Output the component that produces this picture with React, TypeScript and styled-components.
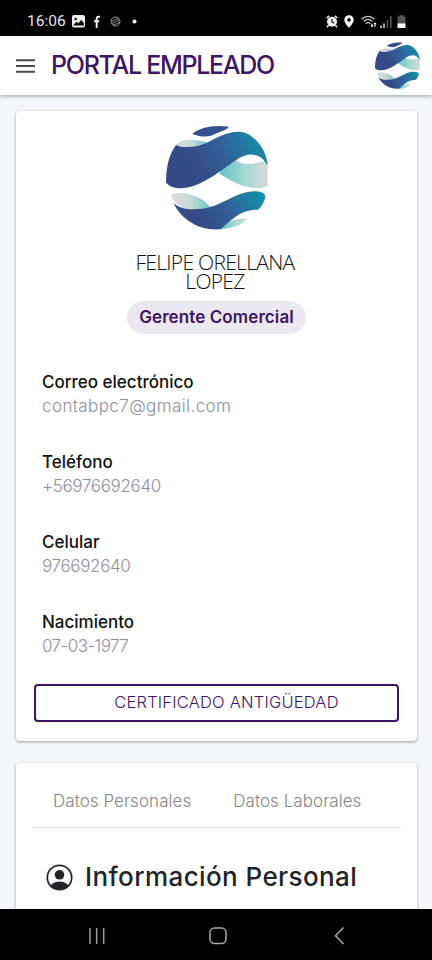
import React from "react";
import styled, { createGlobalStyle } from "styled-components";

const PURPLE = "#3d1466";

const GlobalStyle = createGlobalStyle`
  * { box-sizing: border-box; }
  html, body { margin: 0; padding: 0; background: #000; overflow: hidden; }
  body { font-family: Inter, "Open Sans", sans-serif; }
`;

const Screen = styled.div`
  width: 432px;
  height: 960px;
  display: flex;
  flex-direction: column;
  background: #f3f6fa;
  overflow: hidden;
`;

const StatusBar = styled.div`
  flex: 0 0 36px;
  display: flex;
  align-items: flex-start;
  justify-content: space-between;
  padding: 11px 26px 0 27px;
  background: #000;
  color: #e6e6e6;
`;

const Clock = styled.span`
  width: 45px;
  font: 400 15.5px/21px Roboto, sans-serif;
  white-space: nowrap;
`;

const StatusGroup = styled.div`
  display: flex;
  height: 21px;
  align-items: center;
`;

const Header = styled.header`
  flex: 0 0 59px;
  display: flex;
  align-items: center;
  padding: 0 12px 0 16px;
  background: #fff;
  box-shadow: 0 1px 4px rgba(0, 0, 0, 0.35);
  z-index: 1;
`;

const MenuButton = styled.button`
  display: flex;
  padding: 0;
  border: 0;
  background: none;
`;

const Brand = styled.h1`
  flex: 1;
  margin: 0 0 2px 16px;
  font-size: 25px;
  font-weight: 500;
  line-height: 30px;
  letter-spacing: -1.28px;
  color: ${PURPLE};
  white-space: nowrap;
`;

const Content = styled.main`
  flex: 1;
  min-height: 0;
  overflow: hidden;
  display: flex;
  flex-direction: column;
  gap: 22px;
  padding: 16px 15px 0 16px;
`;

const Card = styled.section<{ $height: number }>`
  flex: 0 0 ${(p) => p.$height}px;
  display: flex;
  flex-direction: column;
  background: #fff;
  border-radius: 4px;
  box-shadow: 0 1px 3px rgba(0, 0, 0, 0.38);
`;

const Profile = styled.div`
  display: flex;
  flex-direction: column;
  align-items: center;
  padding-top: 14px;
`;

const Name = styled.h2`
  width: 180px;
  margin: 23px 0 0 -3px;
  font: 300 21px/19px "Open Sans", sans-serif;
  letter-spacing: -0.7px;
  text-align: center;
  color: #111;
`;

const Badge = styled.span`
  height: 33px;
  margin-top: 10px;
  padding: 0 12px;
  border-radius: 17px;
  background: #ece8f1;
  color: ${PURPLE};
  font-size: 17px;
  font-weight: 600;
  line-height: 32px;
  letter-spacing: 0.1px;
`;

const Fields = styled.dl`
  display: flex;
  flex-direction: column;
  gap: 32px;
  margin: 36px 0 0 26px;
`;

const Label = styled.dt`
  font-size: 17px;
  font-weight: 500;
  line-height: 24px;
  color: #111;
`;

const Value = styled.dd<{ $spacing: number }>`
  margin: 0;
  font-size: 17px;
  font-weight: 300;
  line-height: 24px;
  letter-spacing: ${(p) => p.$spacing}px;
  color: #8f8f9d;
`;

const OutlineButton = styled.button`
  height: 38px;
  margin: 26px 18px 0;
  padding: 0 0 1px 20px;
  border: 2px solid ${PURPLE};
  border-radius: 4px;
  background: #fff;
  color: ${PURPLE};
  font: 300 16.5px/33px Inter, sans-serif;
  letter-spacing: 0.2px;
`;

const Tabs = styled.nav`
  display: flex;
  gap: 42px;
  height: 65px;
  margin: 0 16px;
  padding: 26px 0 0 21px;
  border-bottom: 1px solid #e4e5e7;
`;

const Tab = styled.span`
  font-size: 17px;
  font-weight: 300;
  line-height: 24px;
  letter-spacing: 0.05px;
  color: #858585;
  white-space: nowrap;
`;

const SectionTitle = styled.h3`
  display: flex;
  align-items: center;
  gap: 12px;
  margin: 34px 0 0 30px;
  font-size: 26px;
  font-weight: 500;
  line-height: 30px;
  letter-spacing: 0.4px;
  color: #212529;
  white-space: nowrap;
`;

const NavBar = styled.div`
  flex: 0 0 51px;
  display: flex;
  justify-content: space-between;
  padding: 17px 84px 0 87px;
  background: #000;
`;

const Icon = styled.svg<{ $gap?: number }>`
  display: block;
  flex: none;
  margin-left: ${(p) => p.$gap ?? 0}px;
`;

function Globe({ id, width, height }: { id: string; width: number; height: number }) {
  const url = (name: string) => `url(#${id}-${name})`;
  return (
    <Icon width={width} height={height} viewBox="48 45 307 316" preserveAspectRatio="none">
      <defs>
        <linearGradient id={`${id}-deep`} x1="0.25" x2="1" y1="0.5" y2="0.3">
          <stop offset="0" stopColor="#354b87" />
          <stop offset="0.45" stopColor="#30619a" />
          <stop offset="1" stopColor="#128fa9" />
        </linearGradient>
        <linearGradient id={`${id}-aqua`}>
          <stop offset="0" stopColor="#5cc6c5" />
          <stop offset="0.55" stopColor="#a8d8d5" />
          <stop offset="1" stopColor="#d5dad8" />
        </linearGradient>
        <linearGradient id={`${id}-pale`}>
          <stop offset="0" stopColor="#d9dcdc" />
          <stop offset="0.5" stopColor="#c5d9d8" />
          <stop offset="1" stopColor="#69c9c5" />
        </linearGradient>
      </defs>
      <path fill="#35508c" d="M127 72C150 52 190 44 237 50C231 61 211 64 194 73C177 83 151 81 127 72Z" />
      <path fill={url("pale")} d="M78 104C92 86 135 85 172 98C143 114 102 114 78 104Z" />
      <path fill={url("aqua")} d="M207 190L230 150L258 150C278 167 306 164 354 151V230C310 243 269 230 207 190Z" />
      <path fill={url("deep")} d="M78 105C112 119 157 109 190 89C236 63 277 57 303 77C331 98 353 133 354 168C334 127 295 125 258 151C203 189 143 240 83 235C68 234 56 228 48 219C48 172 57 133 78 105Z" />
      <path fill={url("pale")} d="M62 257C81 241 151 251 181 292C135 306 86 304 62 257Z" />
      <path fill={url("deep")} d="M70 280C95 303 142 302 181 292C228 278 260 248 306 245C327 243 345 247 347 260C344 276 337 289 326 299C279 302 256 317 218 358C158 366 99 338 70 280Z" />
      <path fill={url("aqua")} d="M213 359C231 340 246 327 292 325C280 346 252 354 213 359Z" />
    </Icon>
  );
}

const fields = [
  { label: "Correo electrónico", value: "contabpc7@gmail.com", spacing: 0.4 },
  { label: "Teléfono", value: "+56976692640", spacing: -0.35 },
  { label: "Celular", value: "976692640", spacing: -0.35 },
  { label: "Nacimiento", value: "07-03-1977", spacing: -0.55 },
];

function Status() {
  return (
    <StatusBar>
      <StatusGroup>
        <Clock>16:06</Clock>
        <Icon width="13" height="13" viewBox="0 0 13 13">
          <rect width="13" height="12.5" rx="2" fill="#ededed" />
          <circle cx="3.7" cy="4" r="1.2" fill="#000" />
          <path d="M1.5 9.8 4.5 6.8 6.2 8.3 9.3 5l2.5 3v2.5h-10Z" fill="#000" />
        </Icon>
        <Icon $gap={8} width="8" height="14" viewBox="0 0 8 14">
          <path d="M7 1.7H5.7C4.4 1.7 3.7 2.4 3.7 3.8V13M1 6.2h5.3" fill="none" stroke="#ededed" strokeWidth="2" />
        </Icon>
        <Icon $gap={9} width="11" height="11" viewBox="0 0 11 11">
          <circle cx="5.5" cy="5.5" r="4.5" fill="none" stroke="#999" />
          <path d="M1.5 4.5C4 6 5.5 1.7 9 3M2 7c3 1 4-3.5 7.5-2M3 9c3 .7 3.5-3 6.5-2" fill="none" stroke="#aaa" strokeWidth=".9" />
        </Icon>
        <Icon $gap={11} width="5" height="5" viewBox="0 0 5 5">
          <circle cx="2.5" cy="2.5" r="2" fill="#fff" />
        </Icon>
      </StatusGroup>
      <StatusGroup>
        <Icon width="12" height="13" viewBox="0 0 12 13">
          <circle cx="6" cy="6.7" r="5" fill="#efefef" />
          <path d="M.6 3 3.2.9M11.4 3 8.8.9M2.5 10.5 1 12.2M9.5 10.5l1.5 1.7" stroke="#efefef" strokeWidth="1.6" />
          <path d="M6 3.8v3.1l2.2 1.2" fill="none" stroke="#000" strokeWidth="1.1" />
        </Icon>
        <Icon $gap={6} width="10" height="13" viewBox="0 0 10 13">
          <path fillRule="evenodd" fill="#fff" d="M5 .2a4.7 4.7 0 0 0-4.7 4.7C.3 8 5 12.8 5 12.8S9.7 8 9.7 4.9A4.7 4.7 0 0 0 5 .2Zm0 2.9a1.8 1.8 0 1 1 0 3.6 1.8 1.8 0 0 1 0-3.6Z" />
        </Icon>
        <Icon $gap={7} width="16" height="13" viewBox="0 0 16 13">
          <path d="M.7 4.2C4.5.4 9.5.4 13.3 4.2M2.7 6.5c2.6-2.5 6-2.5 8.5 0M4.7 8.7c1.5-1.3 3.3-1.3 4.7 0" fill="none" stroke="#c9c9c9" strokeWidth="1.3" />
          <path d="M11 11.5V8.7M14 12V8" stroke="#ddd" strokeWidth="1.2" fill="none" />
          <path d="m9.3 10.2 1.7 2 1.5-2zM12.3 9.2 14 7.3l1.7 1.9z" fill="#eee" />
        </Icon>
        <Icon $gap={3} width="12" height="12" viewBox="0 0 12 12">
          <path d="M1 12V9.5M4 12V7.5" stroke="#e0e0e0" strokeWidth="1.5" />
          <path d="M7.5 12V4M10.8 12V0" stroke="#5e5e5e" strokeWidth="1.5" />
        </Icon>
        <Icon $gap={5} width="9" height="13" viewBox="0 0 9 13">
          <path d="M2.5 0h4v1.5h1a1 1 0 0 1 1 1V9H.5V2.5a1 1 0 0 1 1-1h1Z" fill="#555" />
          <path d="M.5 8.5h8V12a1 1 0 0 1-1 1h-6a1 1 0 0 1-1-1Z" fill="#fff" />
        </Icon>
      </StatusGroup>
    </StatusBar>
  );
}

export default function App() {
  return (
    <>
      <GlobalStyle />
      <Screen>
        <Status />
        <Header>
          <MenuButton aria-label="Menu">
            <Icon width="19" height="14" viewBox="0 0 19 14">
              <path d="M0 1.2h19M0 7h19M0 12.8h19" stroke="#4b4b4b" strokeWidth="2" />
            </Icon>
          </MenuButton>
          <Brand>PORTAL EMPLEADO</Brand>
          <Globe id="small" width={45} height={47} />
        </Header>
        <Content>
          <Card $height={630}>
            <Profile>
              <Globe id="large" width={102} height={105} />
              <Name>FELIPE ORELLANA LOPEZ</Name>
              <Badge>Gerente Comercial</Badge>
            </Profile>
            <Fields>
              {fields.map((f) => (
                <div key={f.label}>
                  <Label>{f.label}</Label>
                  <Value $spacing={f.spacing}>{f.value}</Value>
                </div>
              ))}
            </Fields>
            <OutlineButton>CERTIFICADO ANTIGÜEDAD</OutlineButton>
          </Card>
          <Card $height={200}>
            <Tabs>
              <Tab>Datos Personales</Tab>
              <Tab>Datos Laborales</Tab>
            </Tabs>
            <SectionTitle>
              <Icon width="27" height="27" viewBox="0 0 27 27">
                <defs>
                  <clipPath id="avatar-ring">
                    <circle cx="13.5" cy="13.5" r="12.5" />
                  </clipPath>
                </defs>
                <circle cx="13.5" cy="13.5" r="12.2" fill="none" stroke="#212529" strokeWidth="1.7" />
                <circle cx="13.5" cy="10.8" r="4.8" fill="#212529" />
                <ellipse cx="13.5" cy="24.5" rx="9.8" ry="7" fill="#212529" clipPath="url(#avatar-ring)" />
              </Icon>
              Información Personal
            </SectionTitle>
          </Card>
        </Content>
        <NavBar>
          <Icon width="20" height="20" viewBox="0 0 20 20">
            <path d="M3 2v16M9.7 2v16M16.7 2v16" stroke="#9c9c9c" strokeWidth="1.5" />
          </Icon>
          <Icon width="20" height="20" viewBox="0 0 20 20">
            <rect x="2" y="2" width="16" height="15.5" rx="4.5" fill="none" stroke="#a8a8a8" strokeWidth="1.5" />
          </Icon>
          <Icon width="20" height="20" viewBox="0 0 20 20">
            <path d="M15.5 1.5 7.5 9.7l8 8.3" fill="none" stroke="#a8a8a8" strokeWidth="1.5" />
          </Icon>
        </NavBar>
      </Screen>
    </>
  );
}
